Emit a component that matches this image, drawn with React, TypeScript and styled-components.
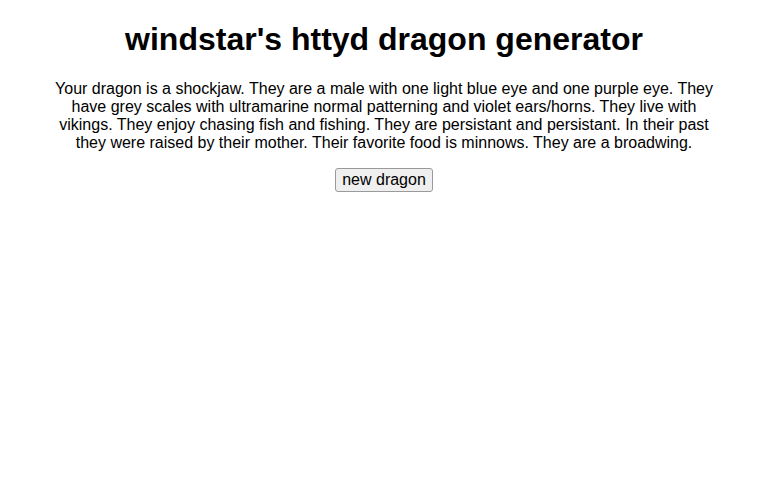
import React, { useState } from "react";
import styled, { createGlobalStyle } from "styled-components";

const GlobalStyle = createGlobalStyle`
  html, body {
    margin: 0;
    padding: 0;
    background: #ffffff;
  }
  body {
    font-family: "Liberation Sans", Arial, sans-serif;
    color: #000000;
  }
`;

const Page = styled.main`
  display: flex;
  flex-direction: column;
  align-items: center;
  text-align: center;
`;

const Title = styled.h1`
  font-size: 32px;
  font-weight: bold;
  margin: 21.44px 0;
`;

const Description = styled.p`
  width: 670px;
  font-size: 16px;
  line-height: normal;
  margin: 0 0 16px;
`;

const NewButton = styled.button`
  font-family: "Liberation Sans", Arial, sans-serif;
  font-size: 16px;
  color: #000000;
  background: #efefef;
  border: 1px solid #9a9a9a;
  border-radius: 3px;
  padding: 2px 6px;
  cursor: pointer;
  &:hover {
    background: #e5e5e5;
  }
`;

const dragons = [
  "Your dragon is a shockjaw. They are a male with one light blue eye and one purple eye. They have grey scales with ultramarine normal patterning and violet ears/horns. They live with vikings. They enjoy chasing fish and fishing. They are persistant and persistant. In their past they were raised by their mother. Their favorite food is minnows. They are a broadwing.",
];

export default function App() {
  const [index, setIndex] = useState(0);
  return (
    <>
      <GlobalStyle />
      <Page>
        <Title>windstar's httyd dragon generator</Title>
        <Description>{dragons[index]}</Description>
        <NewButton onClick={() => setIndex((index + 1) % dragons.length)}>
          new dragon
        </NewButton>
      </Page>
    </>
  );
}
